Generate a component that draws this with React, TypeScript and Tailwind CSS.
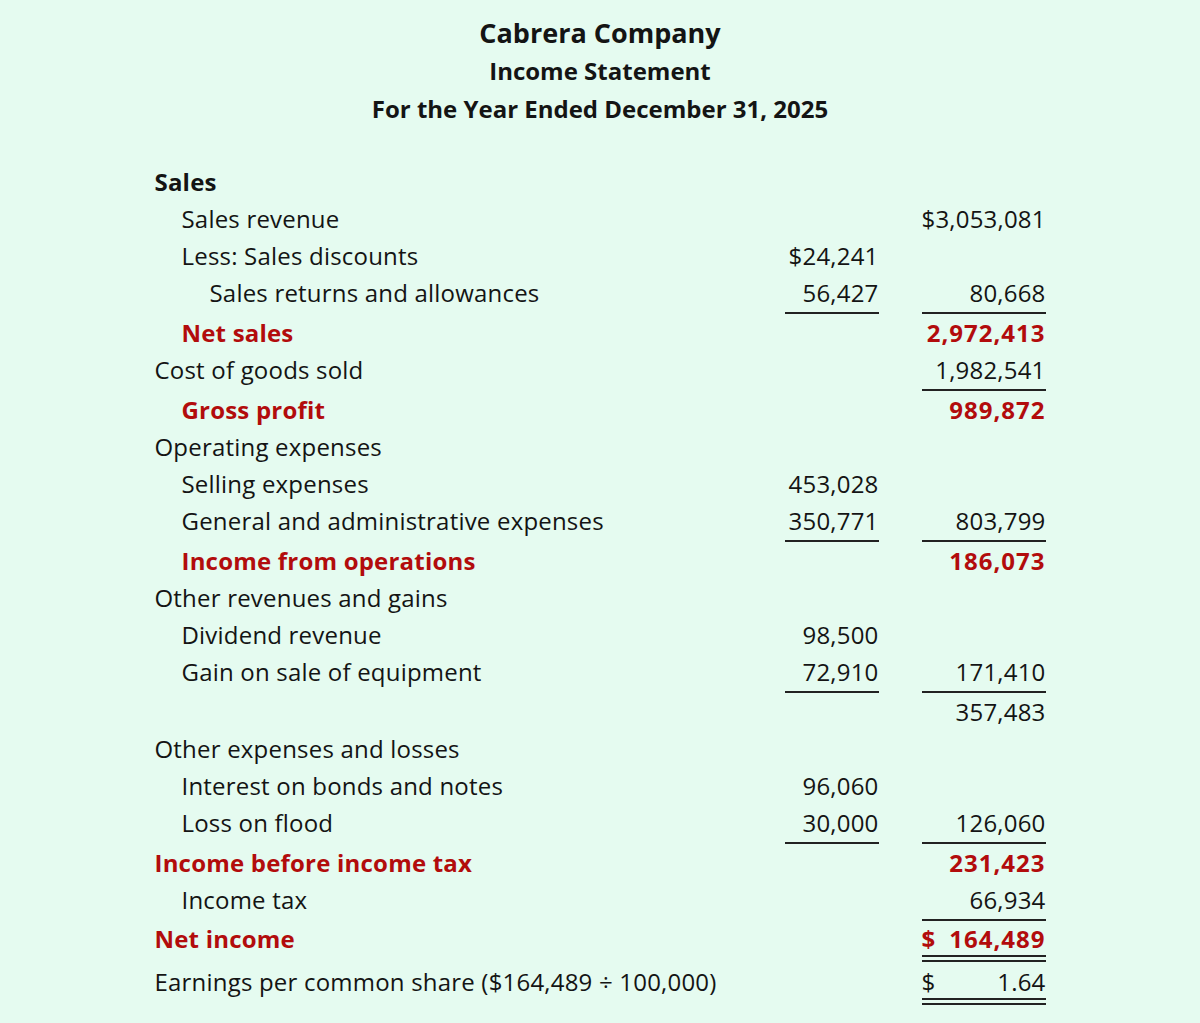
import React from "react";

type Row = {
  label?: string;
  level?: number;
  kind?: "head" | "red" | "plain";
  c1?: string;
  c1u?: boolean;
  c2?: string;
  c2u?: "single" | "double";
  c2red?: boolean;
  dollar?: boolean;
  tall?: "a" | "b";
};

const rows: Row[] = [
  { label: "Sales", level: 0, kind: "head" },
  { label: "Sales revenue", level: 1, c2: "$3,053,081" },
  { label: "Less: Sales discounts", level: 1, c1: "$24,241" },
  { label: "Sales returns and allowances", level: 2, c1: "56,427", c1u: true, c2: "80,668", c2u: "single" },
  { label: "Net sales", level: 1, kind: "red", c2: "2,972,413", c2red: true },
  { label: "Cost of goods sold", level: 0, c2: "1,982,541", c2u: "single" },
  { label: "Gross profit", level: 1, kind: "red", c2: "989,872", c2red: true },
  { label: "Operating expenses", level: 0 },
  { label: "Selling expenses", level: 1, c1: "453,028" },
  { label: "General and administrative expenses", level: 1, c1: "350,771", c1u: true, c2: "803,799", c2u: "single" },
  { label: "Income from operations", level: 1, kind: "red", c2: "186,073", c2red: true },
  { label: "Other revenues and gains", level: 0 },
  { label: "Dividend revenue", level: 1, c1: "98,500" },
  { label: "Gain on sale of equipment", level: 1, c1: "72,910", c1u: true, c2: "171,410", c2u: "single" },
  { label: "", level: 0, c2: "357,483" },
  { label: "Other expenses and losses", level: 0 },
  { label: "Interest on bonds and notes", level: 1, c1: "96,060" },
  { label: "Loss on flood", level: 1, c1: "30,000", c1u: true, c2: "126,060", c2u: "single" },
  { label: "Income before income tax", level: 0, kind: "red", c2: "231,423", c2red: true },
  { label: "Income tax", level: 1, c2: "66,934", c2u: "single" },
  { label: "Net income", level: 0, kind: "red", c2: "164,489", c2red: true, c2u: "double", dollar: true, tall: "a" },
  { label: "Earnings per common share ($164,489 ÷ 100,000)", level: 0, c2: "1.64", c2u: "double", dollar: true, tall: "b" },
];

function cellCls(u: boolean | "single" | "double" | undefined, tall?: "a" | "b") {
  if (u === "double") {
    return tall === "a"
      ? "h-[41px] leading-[35px] border-b-[7px] border-double border-[#222]"
      : "h-[43px] pt-[3px] leading-[33px] border-b-[7px] border-double border-[#222]";
  }
  if (u) return "h-[40px] leading-[37px] border-b-2 border-[#222]";
  return "h-[37px] leading-[37px]";
}

function labelCls(tall?: "a" | "b") {
  if (tall === "a") return "leading-[35px]";
  if (tall === "b") return "pt-[3px] leading-[33px]";
  return "leading-[37px]";
}

export default function App() {
  return (
    <div
      className="min-h-[1023px] w-full bg-[#e5fbf0] text-[#141414]"
      style={{ fontFamily: "'Open Sans', 'Liberation Sans', sans-serif" }}
    >
      <div className="flex flex-col items-center pt-[14px] font-bold">
        <div className="text-[27px] leading-[38px]">Cabrera Company</div>
        <div className="text-[24px] leading-[38px]">Income Statement</div>
        <div className="text-[24px] leading-[37px]">For the Year Ended December 31, 2025</div>
      </div>
      <div className="mx-auto mt-[36px] w-[891px] text-[24px] tracking-[0.2px]">
        {rows.map((r, i) => {
          const pl = r.level === 2 ? "pl-[55px]" : r.level === 1 ? "pl-[27px]" : "pl-0";
          const lk =
            r.kind === "head"
              ? "font-bold text-[#141414]"
              : r.kind === "red"
              ? "font-bold text-[#b20c0c]"
              : "";
          return (
            <div key={i} className="grid grid-cols-[1fr_94px_124px] gap-x-[43px] items-start">
              <div className={`${pl} ${lk} ${labelCls(r.tall)} whitespace-nowrap`}>{r.label}</div>
              <div className={`text-right ${r.c1 ? cellCls(r.c1u) : "h-[37px]"}`}>{r.c1}</div>
              <div
                className={`${r.dollar ? "flex justify-between" : "text-right"} ${
                  r.c2 ? cellCls(r.c2u, r.tall) : "h-[37px]"
                } ${r.c2red ? "font-bold text-[#b20c0c] tracking-[1px]" : ""}`}
              >
                {r.dollar ? (
                  <>
                    <span>$</span>
                    <span>{r.c2}</span>
                  </>
                ) : (
                  r.c2
                )}
              </div>
            </div>
          );
        })}
      </div>
    </div>
  );
}
